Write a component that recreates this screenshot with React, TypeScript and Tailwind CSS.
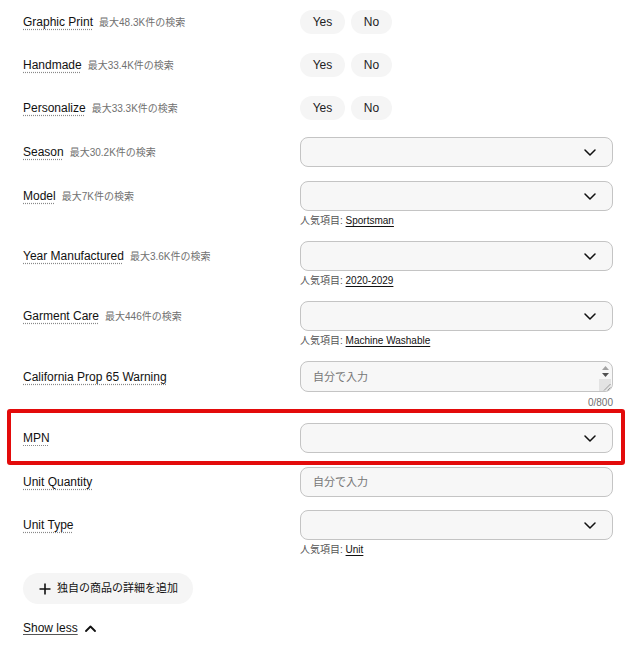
import React from "react";

const FONT = { fontFamily: '"Liberation Sans", Arial, "Noto Sans CJK JP", sans-serif' };

function Chevron() {
  return (
    <svg width="12" height="7" viewBox="0 0 12 7" fill="none" className="shrink-0">
      <polyline points="1,1 6,6 11,1" stroke="#111" strokeWidth="1.5" strokeLinecap="round" strokeLinejoin="round" />
    </svg>
  );
}

function Label({ text, count }: { text: string; count?: string }) {
  return (
    <div className="w-[277px] shrink-0 flex items-baseline gap-[6px]">
      <span className="text-[12px] text-[#111] underline decoration-dotted decoration-[#888] underline-offset-[3px]">
        {text}
      </span>
      {count && <span className="text-[10px] text-[#707070]">{count}</span>}
    </div>
  );
}

function Pills() {
  return (
    <div className="flex gap-[6px]">
      <button className="h-6 w-[45px] rounded-full bg-[#f5f5f5] text-[12px] text-[#222]">Yes</button>
      <button className="h-6 w-[41px] rounded-full bg-[#f5f5f5] text-[12px] text-[#222]">No</button>
    </div>
  );
}

function Select() {
  return (
    <div className="h-[30px] w-[313px] rounded-[8px] border border-[#c4c4c4] bg-[#f7f7f7] flex items-center justify-end pr-[16px]">
      <Chevron />
    </div>
  );
}

function Helper({ value }: { value: string }) {
  return (
    <div className="mt-[4px] leading-[12px] text-[10px] text-[#555]">
      人気項目: <span className="text-[#111] underline underline-offset-[2px]">{value}</span>
    </div>
  );
}

function Row({
  label,
  count,
  children,
  mt,
  h,
}: {
  label: string;
  count?: string;
  children: React.ReactNode;
  mt: string;
  h: string;
}) {
  return (
    <div className={"flex " + mt}>
      <div className={"flex items-center " + h}>
        <Label text={label} count={count} />
      </div>
      <div className="flex flex-col">{children}</div>
    </div>
  );
}

function TextArea() {
  return (
    <div className="relative h-[31px] w-[313px]">
      <textarea
        placeholder="自分で入力"
        className="block h-[31px] w-[313px] resize-none overflow-hidden rounded-[8px] border border-[#c4c4c4] bg-[#f7f7f7] pl-[12px] pr-[18px] py-[7px] text-[11px] leading-[16px] text-[#111] placeholder:text-[#767676] outline-none"
        style={FONT}
      />
      <div className="pointer-events-none absolute right-[2px] top-[3px] flex h-[27px] w-[12px] flex-col items-center">
        <svg width="7" height="4" viewBox="0 0 7 4" className="mt-[2px]">
          <polygon points="0,4 3.5,0 7,4" fill="#a3a3a3" />
        </svg>
        <svg width="7" height="4" viewBox="0 0 7 4" className="mt-[3px]">
          <polygon points="0,0 7,0 3.5,4" fill="#505050" />
        </svg>
        <div className="mt-[2px] flex w-[12px] flex-1 items-end justify-end rounded-br-[6px] bg-[#e3e3e3]">
          <svg width="8" height="8" viewBox="0 0 8 8">
            <line x1="1" y1="7.5" x2="7.5" y2="1" stroke="#9a9a9a" strokeWidth="1" />
            <line x1="4.5" y1="7.5" x2="7.5" y2="4.5" stroke="#9a9a9a" strokeWidth="1" />
          </svg>
        </div>
      </div>
    </div>
  );
}

export default function App() {
  return (
    <div className="relative w-[640px] h-[654px] bg-white pl-[23px] pt-[10px]" style={FONT}>
      <Row label="Graphic Print" count="最大48.3K件の検索" mt="mt-0" h="h-6">
        <Pills />
      </Row>
      <Row label="Handmade" count="最大33.4K件の検索" mt="mt-[19px]" h="h-6">
        <Pills />
      </Row>
      <Row label="Personalize" count="最大33.3K件の検索" mt="mt-[19px]" h="h-6">
        <Pills />
      </Row>
      <Row label="Season" count="最大30.2K件の検索" mt="mt-[17px]" h="h-[30px]">
        <Select />
      </Row>
      <Row label="Model" count="最大7K件の検索" mt="mt-[14px]" h="h-[30px]">
        <Select />
        <Helper value="Sportsman" />
      </Row>
      <Row label="Year Manufactured" count="最大3.6K件の検索" mt="mt-[14px]" h="h-[30px]">
        <Select />
        <Helper value="2020-2029" />
      </Row>
      <Row label="Garment Care" count="最大446件の検索" mt="mt-[14px]" h="h-[30px]">
        <Select />
        <Helper value="Machine Washable" />
      </Row>
      <Row label="California Prop 65 Warning" mt="mt-[14px]" h="h-[31px]">
        <TextArea />
        <div className="mt-[4px] text-right text-[10px] leading-[14px] text-[#707070]">0/800</div>
      </Row>
      <div className="relative mt-[13px]">
        <Row label="MPN" mt="mt-0" h="h-[30px]">
          <Select />
        </Row>
        <div className="pointer-events-none absolute left-[-16px] top-[-14px] h-[56px] w-[618px] rounded-[3px] border-[4px] border-[#e30b0b]" />
      </div>
      <Row label="Unit Quantity" mt="mt-[14px]" h="h-[30px]">
        <div className="flex h-[30px] w-[313px] items-center rounded-[8px] border border-[#c4c4c4] bg-[#f7f7f7] px-[12px] text-[11px] text-[#767676]">
          自分で入力
        </div>
      </Row>
      <Row label="Unit Type" mt="mt-[13px]" h="h-[30px]">
        <Select />
        <Helper value="Unit" />
      </Row>
      <button className="mt-[17px] flex h-[31px] items-center gap-[6px] rounded-full bg-[#f5f5f5] pl-[16px] pr-[15px] text-[11px] text-[#111]">
        <svg width="12" height="12" viewBox="0 0 12 12" fill="none">
          <path d="M6 0.5V11.5M0.5 6H11.5" stroke="#111" strokeWidth="1.6" />
        </svg>
        独自の商品の詳細を追加
      </button>
      <div className="mt-[14px] flex h-[20px] items-center gap-[7px]">
        <span className="text-[12px] text-[#111] underline underline-offset-[2px] decoration-[#555]">Show less</span>
        <svg width="11" height="7" viewBox="0 0 11 7" fill="none">
          <polyline points="1,6 5.5,1.5 10,6" stroke="#111" strokeWidth="1.8" strokeLinecap="round" strokeLinejoin="round" />
        </svg>
      </div>
    </div>
  );
}
